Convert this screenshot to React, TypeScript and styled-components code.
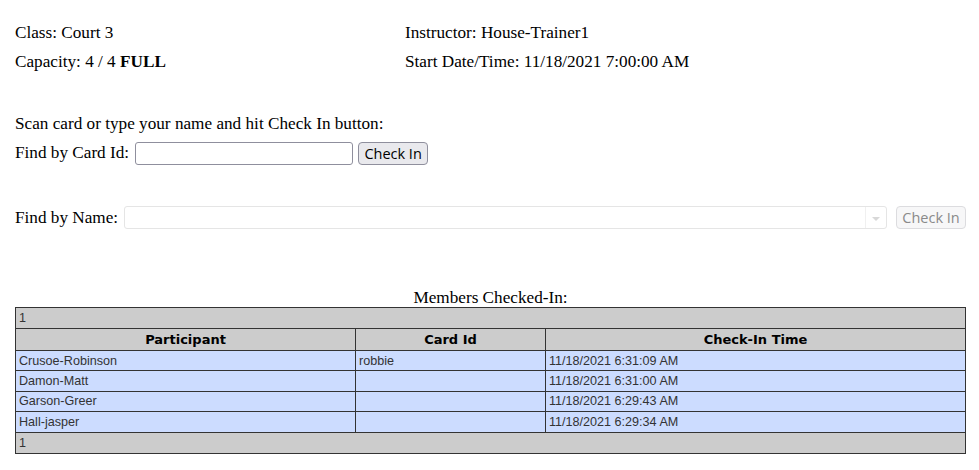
import styled, { createGlobalStyle } from 'styled-components';

const GlobalStyle = createGlobalStyle`
  html, body {
    margin: 0;
    background: #fff;
    font-family: "Liberation Serif", "Times New Roman", serif;
    font-size: 17.2px;
    color: #000;
  }
`;

type Member = {
  name: string;
  cardId: string;
  time: string;
};

const members: Member[] = [
  { name: 'Crusoe-Robinson', cardId: 'robbie', time: '11/18/2021 6:31:09 AM' },
  { name: 'Damon-Matt', cardId: '', time: '11/18/2021 6:31:00 AM' },
  { name: 'Garson-Greer', cardId: '', time: '11/18/2021 6:29:43 AM' },
  { name: 'Hall-jasper', cardId: '', time: '11/18/2021 6:29:34 AM' },
];

const App = () => (
  <Page>
    <GlobalStyle />
    <InfoGrid>
      <span>Class: Court 3</span>
      <span>Instructor: House-Trainer1</span>
      <span>
        Capacity: 4 / 4 <b>FULL</b>
      </span>
      <span>Start Date/Time: 11/18/2021 7:00:00 AM</span>
    </InfoGrid>

    <Prompt>Scan card or type your name and hit Check In button:</Prompt>
    <FieldRow>
      <label>Find by Card Id:</label>
      <CardInput type="text" />
      <Button>Check In</Button>
    </FieldRow>

    <NameRow>
      <label>Find by Name:</label>
      <NameSelect>
        <Arrow />
      </NameSelect>
      <Button disabled>Check In</Button>
    </NameRow>

    <Caption>Members Checked-In:</Caption>
    <Grid>
      <colgroup>
        <col style={{ width: 340 }} />
        <col style={{ width: 190 }} />
        <col />
      </colgroup>
      <tbody>
        <PagerRow>
          <td colSpan={3}>1</td>
        </PagerRow>
        <HeaderRow>
          <th>Participant</th>
          <th>Card Id</th>
          <th>Check-In Time</th>
        </HeaderRow>
        {members.map((m) => (
          <DataRow key={m.name}>
            <td>{m.name}</td>
            <td>{m.cardId}</td>
            <td>{m.time}</td>
          </DataRow>
        ))}
        <PagerRow>
          <td colSpan={3}>1</td>
        </PagerRow>
      </tbody>
    </Grid>
  </Page>
);

export default App;

const Page = styled.div`
  width: 951px;
  padding: 24px 13px 0 15px;
`;

const InfoGrid = styled.div`
  display: grid;
  grid-template-columns: 390px 1fr;
  row-gap: 11px;
  line-height: 18px;
`;

const Prompt = styled.div`
  margin-top: 44px;
  line-height: 18px;
`;

const FieldRow = styled.div`
  display: flex;
  align-items: center;
  gap: 6px;
  margin-top: 8px;
  height: 24px;
`;

const NameRow = styled(FieldRow)`
  margin-top: 41px;
  height: 23px;
  gap: 0;

  label {
    margin-right: 6px;
  }

  button {
    margin-left: 9px;
  }
`;

const CardInput = styled.input`
  box-sizing: border-box;
  width: 218px;
  height: 23px;
  margin: 0 -1px 0 0;
  border: 1px solid #8f8f9d;
  border-radius: 3px;
  background: #fff;
  padding: 1px 4px;
`;

const NameSelect = styled.div`
  box-sizing: border-box;
  flex: 1;
  height: 23px;
  border: 1px solid #e5e5e5;
  border-radius: 3px;
  background: #fff;
  display: flex;
  justify-content: flex-end;
`;

const Arrow = styled.div`
  width: 20px;
  height: 100%;
  border-left: 1px solid #f0f0f0;
  display: flex;
  align-items: center;
  justify-content: center;

  &::after {
    content: '';
    border-left: 4px solid transparent;
    border-right: 4px solid transparent;
    border-top: 4px solid #d8d8d8;
    margin-top: 2px;
  }
`;

const Button = styled.button`
  box-sizing: border-box;
  height: 23px;
  width: 70px;
  padding: 0 4px;
  border: 1px solid #8f8f9d;
  border-radius: 4px;
  background: #e9e9ed;
  color: #000;
  font-family: "Open Sans", "Noto Sans", sans-serif;
  font-size: 14.5px;
  white-space: nowrap;

  &:disabled {
    border-color: #dcdcdf;
    background: #f7f7f8;
    color: #8a8a8a;
  }
`;

const Caption = styled.div`
  margin-top: 60px;
  text-align: center;
  line-height: 18px;
`;

const Grid = styled.table`
  width: 951px;
  border-collapse: collapse;
  border: 1px solid #333;
  table-layout: fixed;
  font-family: "Liberation Sans", Arial, sans-serif;
  font-size: 12.6px;
  color: #333;

  td,
  th {
    border: 1px solid #333;
    padding: 0 3px;
    height: 19.4px;
    text-align: left;
    white-space: nowrap;
  }
`;

const PagerRow = styled.tr`
  background: #cccccc;

  td {
    height: 20px;
  }
`;

const HeaderRow = styled.tr`
  background: #cccccc;

  th {
    height: 21px;
    text-align: center;
    font-family: "DejaVu Sans", Verdana, sans-serif;
    font-size: 13px;
    font-weight: bold;
    color: #000;
  }
`;

const DataRow = styled.tr`
  background: #ccdcff;
`;
